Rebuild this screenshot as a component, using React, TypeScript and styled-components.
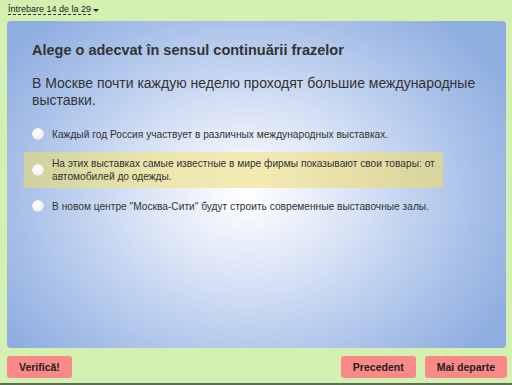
import styled, { createGlobalStyle } from "styled-components"

const GlobalStyle = createGlobalStyle`
  html, body {
    margin: 0;
    padding: 0;
  }
  body {
    font-family: "Liberation Sans", Arial, sans-serif;
    background: #d4f0b1;
  }
`

const options = [
  { text: "Каждый год Россия участвует в различных международных выставках.", active: false },
  { text: "На этих выставках самые известные в мире фирмы показывают свои товары: от автомобилей до одежды.", active: true },
  { text: "В новом центре \"Москва-Сити\" будут строить современные выставочные залы.", active: false },
]

export default function App () {
  return (
    <>
      <GlobalStyle />
      <Frame>
        <Header>
          <Counter>Întrebare 14 de la 29</Counter>
          <Caret />
        </Header>
        <Panel>
          <Title>Alege o adecvat în sensul continuării frazelor</Title>
          <Question>
            В Москве почти каждую неделю проходят большие международные выставки.
          </Question>
          <Options>
            {options.map(o => (
              <Option key={o.text} active={o.active}>
                <Radio />
                <OptionText>{o.text}</OptionText>
              </Option>
            ))}
          </Options>
        </Panel>
        <Footer>
          <Button>Verifică!</Button>
          <Spacer />
          <Button>Precedent</Button>
          <Button>Mai departe</Button>
        </Footer>
      </Frame>
    </>
  )
}

const Frame = styled.div`
  width: 512px;
  height: 385px;
  box-sizing: border-box;
  display: flex;
  flex-direction: column;
  background: #d4f0b1;
  border-bottom: 2px solid #5d6b58;
  padding: 0 6px 0 7px;
`

const Header = styled.div`
  height: 21px;
  display: flex;
  align-items: center;
  gap: 2px;
  padding: 0 1px 2px;
  box-sizing: border-box;
`

const Counter = styled.span`
  font-size: 9px;
  color: #222;
  border-bottom: 1px dashed #333;
  line-height: 10px;
`

const Caret = styled.span`
  width: 0;
  height: 0;
  border-left: 3px solid transparent;
  border-right: 3px solid transparent;
  border-top: 3px solid #222;
  margin-top: 1px;
`

const Panel = styled.div`
  height: 327px;
  border-radius: 4px;
  box-sizing: border-box;
  padding: 21px 25px 0 17px;
  background: radial-gradient(ellipse 60% 72% at 48% 53%, #ffffff 0%, #e2eaf8 28%, #b4c9ec 66%, #8eade0 100%);
`

const Title = styled.h1`
  margin: 0 0 0 8px;
  font-size: 14.5px;
  font-weight: 700;
  color: #333;
  line-height: 17px;
`

const Question = styled.p`
  margin: 16px 0 0 8px;
  font-size: 14px;
  color: #333;
  line-height: 17px;
`

const Options = styled.div`
  width: 419px;
  margin-top: 17px;
  display: flex;
  flex-direction: column;
  gap: 10px;
`

const Option = styled.div<{ active: boolean }>`
  display: flex;
  align-items: center;
  gap: 8px;
  padding: ${p => (p.active ? "4px 2px 5px 8px" : "0 2px 0 8px")};
  min-height: 16px;
  border-radius: 2px;
  background: ${p =>
    p.active
      ? "linear-gradient(90deg, #cfd19f 0%, #ebe5ad 30%, #f4ebb4 55%, #e6dea6 80%, #d7d49d 100%)"
      : "transparent"};
`

const Radio = styled.span`
  flex: 0 0 auto;
  width: 12px;
  height: 12px;
  border-radius: 50%;
  background: radial-gradient(circle at 45% 40%, #ffffff 0%, #f3f3f3 55%, #d6d6d6 100%);
  box-shadow: 0 0 1px rgba(0, 0, 0, 0.25);
`

const OptionText = styled.span`
  font-size: 10.2px;
  color: #333;
  line-height: 13px;
  padding-top: 1px;
`

const Footer = styled.div`
  display: flex;
  align-items: center;
  gap: 9px;
  padding: 8px 0 0 0;
  margin-right: -1px;
`

const Spacer = styled.div`
  flex: 1;
`

const Button = styled.button`
  height: 22px;
  padding: 0 12px;
  border: none;
  border-radius: 3px;
  background: #fa8989;
  color: #222;
  font-family: "Liberation Sans", Arial, sans-serif;
  font-size: 10.5px;
  font-weight: 700;
  cursor: pointer;
`
